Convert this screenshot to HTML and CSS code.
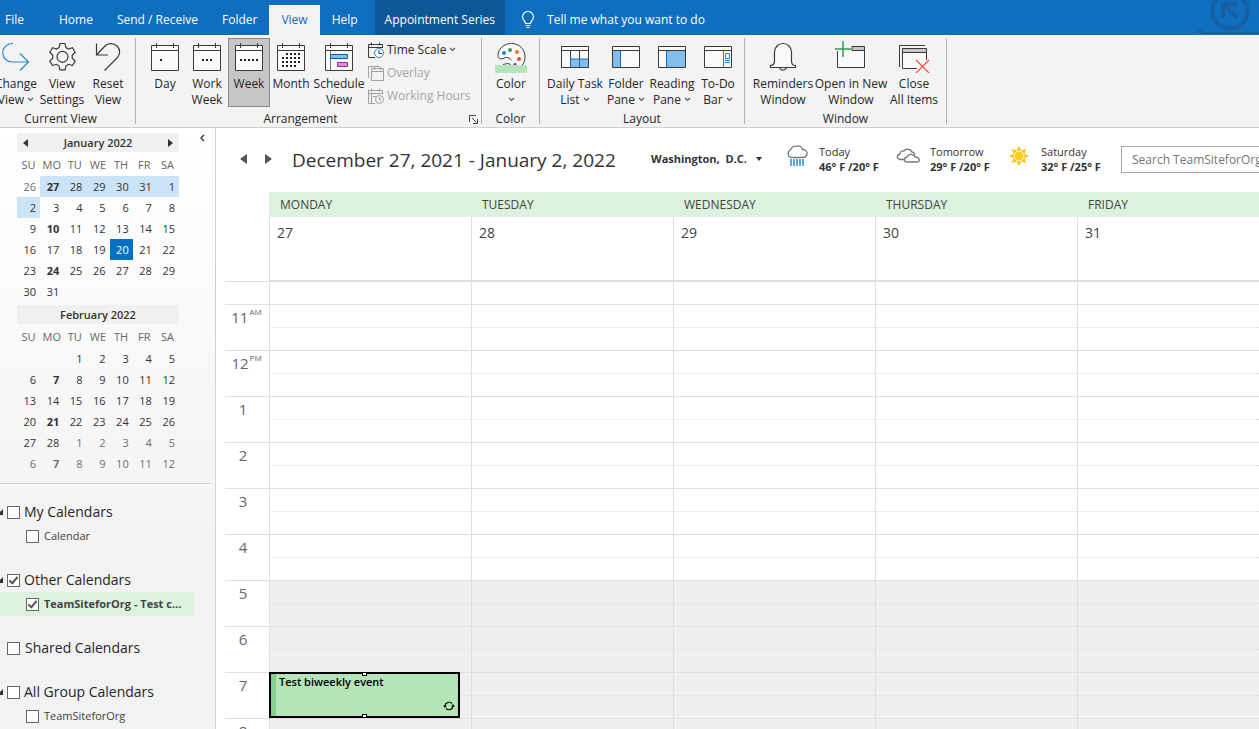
FILE: index.html
```html
<!DOCTYPE html>
<html lang="en">
<head>
    <meta charset="UTF-8">
    <meta name="viewport" content="width=device-width, initial-scale=1.0">
    <title>Calendar</title>
    <link rel="stylesheet" href="styles.css">
</head>
<body>
    <!-- Shared icon shapes -->
    <svg class="defs" aria-hidden="true">
        <symbol id="chevron" viewBox="0 0 7 5"><path d="M1 1l2.500 2.500L6 1" fill="none" stroke="#555" stroke-width="1.100"/></symbol>
        <symbol id="cal" viewBox="0 0 32 32"><path d="M2.500 4.500h27v25h-27z" fill="#fafafa" stroke="#3b3a39"/><path d="M2 9.500h28M7.500 2v5M24.500 2v5" fill="none" stroke="#3b3a39"/></symbol>
        <symbol id="pane" viewBox="0 0 32 32"><path d="M2.500 5.500h27v21h-27z" fill="#fafafa" stroke="#3b3a39"/><path d="M2 9.500h28" stroke="#3b3a39"/></symbol>
    </svg>

    <nav class="tabs">
        <a href="#" class="tab tab-file">File</a>
        <a href="#" class="tab">Home</a>
        <a href="#" class="tab">Send / Receive</a>
        <a href="#" class="tab">Folder</a>
        <a href="#" class="tab active">View</a>
        <a href="#" class="tab">Help</a>
        <a href="#" class="tab context">Appointment Series</a>
        <button class="tell-me">
            <svg width="14" height="18" viewBox="0 0 14 18" fill="none" stroke="#fff" stroke-width="1.200"><path d="M4.500 12.500c0-2.500-3-3.500-3-6.500a5.500 5.500 0 0 1 11 0c0 3-3 4-3 6.500zM4.500 14.500h5M5.500 16.500h3"/></svg>
            Tell me what you want to do
        </button>
        <svg class="title-art" width="63" height="35" viewBox="0 0 63 35" fill="none" stroke="#155fa3"><circle cx="34" cy="11" r="17.500" stroke-width="4"/><path d="M27 18V4h14M28 5l13 13" stroke-width="4.500"/><path d="M1 33c2-4 5-3 6 0h56" stroke-width="2"/></svg>
    </nav>

    <div class="ribbon">
        <section class="group group-view">
            <div class="buttons">
                <button class="big md">
                    <svg viewBox="0 0 32 32" fill="none" stroke="#2b88d0" stroke-width="1.200"><path d="M13 2.500H12a9 9 0 0 0 0 18.500h16M20 12.500l8.500 8.500-8.500 8.500"/></svg>
                    <span>Change<br>View <svg class="chev"><use href="#chevron"/></svg></span>
                </button>
                <button class="big sm">
                    <svg viewBox="0 0 32 32" fill="none" stroke="#3b3a39" stroke-width="1.200"><path d="M13 6.600L14 2.500h5l1 4.100 2.500 1.500 4-1.300 2.700 4.500-3 2.900v3l3 2.900-2.700 4.500-4-1.300-2.500 1.500-1 4.100h-5l-1-4.100-2.500-1.500-4 1.300-2.700-4.500 3-2.900v-3l-3-2.900 2.700-4.500 4 1.300z"/><circle cx="16.500" cy="15.800" r="5.500"/></svg>
                    <span>View<br>Settings</span>
                </button>
                <button class="big md">
                    <svg viewBox="0 0 32 32" fill="none" stroke="#3b3a39" stroke-width="1.200"><path d="M4.500 2.500v11.500h11.500M4.500 14L13 5c3-3 8-3.500 12 0 3.500 3.500 3.500 8.500 0 12L12.500 29.500"/></svg>
                    <span>Reset<br>View</span>
                </button>
            </div>
            <h2>Current View</h2>
        </section>

        <section class="group group-arrange">
            <div class="buttons">
                <button class="big sm">
                    <svg viewBox="0 0 32 32"><use href="#cal"/><path d="M11 18h2v2h-2z" fill="#222"/></svg>
                    <span>Day</span>
                </button>
                <button class="big sm">
                    <svg viewBox="0 0 32 32"><use href="#cal"/><path d="M11 18h2v2h-2zM15 18h2v2h-2zM19 18h2v2h-2z" fill="#222"/></svg>
                    <span>Work<br>Week</span>
                </button>
                <button class="big sm selected">
                    <svg viewBox="0 0 32 32"><use href="#cal"/><path d="M7 18h2v2H7zM11 18h2v2h-2zM15 18h2v2h-2zM19 18h2v2h-2zM23 18h2v2h-2z" fill="#222"/></svg>
                    <span>Week</span>
                </button>
                <button class="big sm">
                    <svg viewBox="0 0 32 32"><use href="#cal"/><path d="M11 13h14M7 17h18M7 21h18M7 25h14" stroke="#222" stroke-width="2" stroke-dasharray="2 2"/></svg>
                    <span>Month</span>
                </button>
                <button class="big wd">
                    <svg viewBox="0 0 32 32"><use href="#cal"/><path d="M7.500 10v19" stroke="#777"/><path d="M7.500 13.500h17v4h-17z" fill="#83bdec" stroke="#0f5ea8"/><path d="M14.500 21.500h10v4h-10z" fill="#d590da" stroke="#8f2f95"/></svg>
                    <span>Schedule<br>View</span>
                </button>
                <div class="stack">
                    <button class="small">
                        <svg viewBox="0 0 16 16" fill="none" stroke="#3b3a39"><path d="M7 15.500H.5v-13h14V6M0 5.500h14M3.500.5v3M11.500.5v3"/><circle cx="11" cy="11" r="4.500" fill="#fafafa" stroke="#2b88d0"/><path d="M11 8v3.500h3"/></svg>
                        Time Scale <svg class="chev"><use href="#chevron"/></svg>
                    </button>
                    <button class="small" disabled>
                        <svg viewBox="0 0 16 16" fill="none" stroke="#a19f9d"><path d="M.5 13V1.500H12M3.500 3.500h12v12h-12zM3 6.500h12M6.500 2v3M12.500 2v3"/></svg>
                        Overlay
                    </button>
                    <button class="small" disabled>
                        <svg viewBox="0 0 16 16" fill="none" stroke="#a19f9d"><path d="M7 15.500H.5v-13h14V6M0 5.500h14M3.500.5v3M11.500.5v3M3.500 6v9M5 8.500h3"/><circle cx="11.500" cy="11.500" r="4"/><path d="M11.500 9v3h2"/></svg>
                        Working Hours
                    </button>
                </div>
            </div>
            <h2>Arrangement</h2>
            <button class="launcher" aria-label="Arrangement options">
                <svg width="9" height="9" viewBox="0 0 9 9" fill="none" stroke="#444"><path d="M.5 7V.5H7M3 3l4.500 4.500M8.500 4v4.500H4"/></svg>
            </button>
        </section>

        <section class="group group-color">
            <div class="buttons">
                <button class="big md">
                    <svg viewBox="0 0 32 32"><path d="M8 24c3-2 8-2 8 1s1 3 3 3c6 0 11-5 11-12C30 8 24 2.500 16.500 2.500 9 2.500 3 8 3 14.500c0 3 2 4 5 3 3-2 7-1 8.500 2" fill="#fafafa" stroke="#3b3a39"/><circle cx="9" cy="12" r="2" fill="#1a86d9"/><circle cx="15" cy="9" r="2" fill="#2e9e4a"/><circle cx="22" cy="11" r="2" fill="#e07a10"/><circle cx="24" cy="18" r="2" fill="#ec4a3d"/><circle cx="20" cy="24" r="2" fill="#9b3fa5"/><path d="M0 24h32v8H0z" fill="#b4e5b9"/></svg>
                    <span>Color<br><svg class="chev"><use href="#chevron"/></svg></span>
                </button>
            </div>
            <h2>Color</h2>
        </section>

        <section class="group group-layout">
            <div class="buttons">
                <button class="big lg">
                    <svg viewBox="0 0 32 32"><use href="#pane"/><path d="M11 18h18.500v8.500H11z" fill="#83bdec"/><path d="M11.500 10v8M20.500 10v8" stroke="#3b3a39"/><path d="M11.500 18v9M20.500 18v9M11 18h19" stroke="#106ebe"/><path d="M2.500 5.500h27v21h-27z" fill="none" stroke="#3b3a39"/></svg>
                    <span>Daily Task<br>List <svg class="chev"><use href="#chevron"/></svg></span>
                </button>
                <button class="big sm">
                    <svg viewBox="0 0 32 32"><use href="#pane"/><path d="M3 10h7v16H3z" fill="#83bdec"/><path d="M10.500 10v16" stroke="#106ebe"/></svg>
                    <span>Folder<br>Pane <svg class="chev"><use href="#chevron"/></svg></span>
                </button>
                <button class="big md">
                    <svg viewBox="0 0 32 32"><use href="#pane"/><path d="M11 10h18v16H11z" fill="#83bdec"/><path d="M10.500 10v16" stroke="#106ebe"/></svg>
                    <span>Reading<br>Pane <svg class="chev"><use href="#chevron"/></svg></span>
                </button>
                <button class="big sm">
                    <svg viewBox="0 0 32 32"><use href="#pane"/><path d="M21.500 10v16M23.500 12.500h4v5h-4zM23 19.500h5M23 21.500h5" fill="none" stroke="#2387d0"/></svg>
                    <span>To-Do<br>Bar <svg class="chev"><use href="#chevron"/></svg></span>
                </button>
            </div>
            <h2>Layout</h2>
        </section>

        <section class="group group-window">
            <div class="buttons">
                <button class="big lg">
                    <svg viewBox="0 0 32 32" fill="#fafafa" stroke="#3b3a39" stroke-width="1.200"><path d="M12.500 27a4 4 0 0 0 7 0M3.500 26.500v-2c2.500 0 4-2 4-4.500v-9a8.500 8.500 0 0 1 17 0v9c0 2.500 1.500 4.500 4 4.500v2z"/></svg>
                    <span>Reminders<br>Window</span>
                </button>
                <button class="big xl">
                    <svg viewBox="0 0 32 32"><path d="M2.500 10v16.500h27v-21H16v4H7" fill="#fafafa"/><path d="M17 5.500h12.500v4H17z" fill="#c8c6c4" stroke="#3b3a39"/><path d="M2.500 10v16.500h27V9" fill="none" stroke="#3b3a39"/><path d="M8 0v16M0 8h16" stroke="#2ea04f" stroke-width="1.500"/></svg>
                    <span>Open in New<br>Window</span>
                </button>
                <button class="big md">
                    <svg viewBox="0 0 32 32"><path d="M1.500 26V4.500H27" fill="none" stroke="#3b3a39"/><path d="M4.500 7.500h24v20h-24z" fill="#fafafa"/><path d="M4.500 7.500h24v4h-24z" fill="#c8c6c4" stroke="#3b3a39"/><path d="M28.500 11v8M19 27.500H4.500V11" fill="none" stroke="#3b3a39"/><path d="M18 19l13 13M31 19L18 32" stroke="#ec4a3d" stroke-width="1.200"/></svg>
                    <span>Close<br>All Items</span>
                </button>
            </div>
            <h2>Window</h2>
        </section>
    </div>

    <div class="content">
        <aside class="sidebar">
            <div class="minis">
                <table class="mini">
                    <caption><div class="mini-title"><button aria-label="Previous month"><i class="arrow left"></i></button>January 2022<button aria-label="Next month"><i class="arrow right"></i></button></div></caption>
                    <tr><th>SU</th><th>MO</th><th>TU</th><th>WE</th><th>TH</th><th>FR</th><th>SA</th></tr>
                    <tr><td class="dim">26</td><td class="sel busy">27</td><td class="sel">28</td><td class="sel">29</td><td class="sel">30</td><td class="sel">31</td><td class="sel">1</td></tr>
                    <tr><td class="sel">2</td><td>3</td><td>4</td><td>5</td><td>6</td><td>7</td><td>8</td></tr>
                    <tr><td>9</td><td class="busy">10</td><td>11</td><td>12</td><td>13</td><td>14</td><td>15</td></tr>
                    <tr><td>16</td><td>17</td><td>18</td><td>19</td><td class="today">20</td><td>21</td><td>22</td></tr>
                    <tr><td>23</td><td class="busy">24</td><td>25</td><td>26</td><td>27</td><td>28</td><td>29</td></tr>
                    <tr><td>30</td><td>31</td><td></td><td></td><td></td><td></td><td></td></tr>
                </table>
                <table class="mini">
                    <caption><div class="mini-title">February 2022</div></caption>
                    <tr><th>SU</th><th>MO</th><th>TU</th><th>WE</th><th>TH</th><th>FR</th><th>SA</th></tr>
                    <tr><td></td><td></td><td>1</td><td>2</td><td>3</td><td>4</td><td>5</td></tr>
                    <tr><td>6</td><td class="busy">7</td><td>8</td><td>9</td><td>10</td><td>11</td><td>12</td></tr>
                    <tr><td>13</td><td>14</td><td>15</td><td>16</td><td>17</td><td>18</td><td>19</td></tr>
                    <tr><td>20</td><td class="busy">21</td><td>22</td><td>23</td><td>24</td><td>25</td><td>26</td></tr>
                    <tr><td>27</td><td>28</td><td class="dim">1</td><td class="dim">2</td><td class="dim">3</td><td class="dim">4</td><td class="dim">5</td></tr>
                    <tr><td class="dim">6</td><td class="dim busy">7</td><td class="dim">8</td><td class="dim">9</td><td class="dim">10</td><td class="dim">11</td><td class="dim">12</td></tr>
                </table>
                <button class="collapse" aria-label="Collapse pane">
                    <svg width="6" height="8" viewBox="0 0 6 8"><path d="M5 1L2 4l3 3" fill="none" stroke="#444" stroke-width="1.500"/></svg>
                </button>
            </div>
            <div class="lists">
                <div class="list">
                    <label class="list-head open"><input type="checkbox">My Calendars</label>
                    <label class="list-item"><input type="checkbox">Calendar</label>
                </div>
                <div class="list">
                    <label class="list-head open"><input type="checkbox" checked>Other Calendars</label>
                    <label class="list-item current"><input type="checkbox" checked>TeamSiteforOrg - Test c...</label>
                </div>
                <div class="list">
                    <label class="list-head"><input type="checkbox">Shared Calendars</label>
                </div>
                <div class="list">
                    <label class="list-head open"><input type="checkbox">All Group Calendars</label>
                    <label class="list-item"><input type="checkbox">TeamSiteforOrg</label>
                </div>
            </div>
        </aside>

        <main>
            <header class="toolbar">
                <div class="range-nav">
                    <button aria-label="Back"><i class="arrow left big-arrow"></i></button>
                    <button aria-label="Forward"><i class="arrow right big-arrow"></i></button>
                </div>
                <h1>December 27, 2021 - January 2, 2022</h1>
                <button class="place">Washington,&nbsp; D.C. <i class="arrow down"></i></button>
                <div class="forecast">
                    <svg width="24" height="24" viewBox="0 0 24 24"><path d="M6 13.500a4 4 0 0 1-.5-7.500C6.500 3 9 1.500 11.500 2.500 14 .8 17 2.500 17.500 5.500c3.500 0 5 2.500 4.500 5-.5 2-2 3-4 3z" fill="#fff" stroke="#777" stroke-width="1.300"/><path d="M6 15v7M9 15v7M12 15v7M15 15v7M18 15v7" stroke="#1e90e0" stroke-width="1.500"/></svg>
                    <p>Today<b>46° F /20° F</b></p>
                </div>
                <div class="forecast">
                    <svg width="24" height="24" viewBox="0 0 24 24" fill="#fff" stroke="#777" stroke-width="1.300"><path d="M4 15.500C1 15 0 11 4 10c0-2 2-3.500 4-3 2-3 7-2 8 1 2 0 3 2 2.500 4l-3 3.500z"/><path d="M11 18c-3 0-4-4 0-5 2-4 7-3 8 0 3 0 5 2 4 4-.5 1-1 1-2 1z"/></svg>
                    <p>Tomorrow<b>29° F /20° F</b></p>
                </div>
                <div class="forecast">
                    <svg width="24" height="24" viewBox="0 0 24 24"><path d="M12 2l2.300 4.500 4.800-1.600-1.600 4.800L22 12l-4.500 2.300 1.600 4.800-4.800-1.600L12 22l-2.300-4.500-4.800 1.600 1.600-4.800L2 12l4.500-2.300-1.600-4.800 4.800 1.600z" fill="#fdbf0f"/><circle cx="12" cy="12" r="5" fill="#ffce1f" stroke="#fff"/></svg>
                    <p>Saturday<b>32° F /25° F</b></p>
                </div>
                <input class="search" type="search" placeholder="Search TeamSiteforOrg - Test calendar" aria-label="Search calendar">
            </header>

            <div class="week">
                <div class="row names"><span class="time"></span><span>MONDAY</span><span>TUESDAY</span><span>WEDNESDAY</span><span>THURSDAY</span><span>FRIDAY</span></div>
                <div class="row dates"><span class="time"></span><span>27</span><span>28</span><span>29</span><span>30</span><span>31</span></div>
                <div class="row stub"><span class="time"></span><span></span><span></span><span></span><span></span><span></span></div>
                <div class="row hour"><span class="time">11<sup>AM</sup></span><span></span><span></span><span></span><span></span><span></span></div>
                <div class="row hour"><span class="time">12<sup>PM</sup></span><span></span><span></span><span></span><span></span><span></span></div>
                <div class="row hour"><span class="time">1</span><span></span><span></span><span></span><span></span><span></span></div>
                <div class="row hour"><span class="time">2</span><span></span><span></span><span></span><span></span><span></span></div>
                <div class="row hour"><span class="time">3</span><span></span><span></span><span></span><span></span><span></span></div>
                <div class="row hour"><span class="time">4</span><span></span><span></span><span></span><span></span><span></span></div>
                <div class="row hour off"><span class="time">5</span><span></span><span></span><span></span><span></span><span></span></div>
                <div class="row hour off"><span class="time">6</span><span></span><span></span><span></span><span></span><span></span></div>
                <div class="row hour off">
                    <span class="time">7</span>
                    <span>
                        <a href="#" class="event">Test biweekly event
                            <svg class="recur" width="12" height="10" viewBox="0 0 12 10" fill="none" stroke="#111" stroke-width="1.200"><path d="M2 5a4 3.500 0 0 1 7-2.500M10 5a4 3.500 0 0 1-7 2.500"/><path d="M0 4.500h4L2 7zM8 5.500h4L10 3z" fill="#111" stroke="none"/></svg>
                        </a>
                    </span>
                    <span></span><span></span><span></span><span></span>
                </div>
                <div class="row hour off"><span class="time">8</span><span></span><span></span><span></span><span></span><span></span></div>
            </div>
        </main>
    </div>
</body>
</html>
```
FILE: styles.css
```css
*, *::before, *::after {
    box-sizing: border-box;
}
body {
    margin: 0;
    height: 100vh;
    display: flex;
    flex-direction: column;
    overflow: hidden;
    background: #fff;
    color: #262626;
    font-family: "Open Sans", "Noto Sans", sans-serif;
    font-size: 12px;
    line-height: 16px;
}
button {
    font: inherit;
    color: inherit;
    background: none;
    border: none;
    padding: 0;
}
h1, h2, p {
    margin: 0;
    font-weight: normal;
}
.defs {
    display: none;
}

/* Tabs */
.tabs {
    display: flex;
    flex: none;
    height: 35px;
    padding-top: 5px;
    background: #106ebe;
    color: #fff;
    white-space: nowrap;
}
.tab {
    display: flex;
    align-items: center;
    padding: 0 12px;
    color: #fff;
    text-decoration: none;
}
.tab-file {
    padding-left: 5px;
    padding-right: 23px;
}
.tab.active {
    background: #f3f3f3;
    color: #106ebe;
}
.tab.context {
    margin: -5px 0 0 5px;
    padding: 5px 10px 0;
    background: #0e5797;
}
.tell-me {
    display: flex;
    align-items: center;
    gap: 12px;
    margin-left: 16px;
}
.title-art {
    flex: none;
    margin: -5px 0 0 auto;
}

/* Ribbon */
.ribbon {
    display: flex;
    flex: none;
    height: 93px;
    padding: 3px 0;
    margin-left: -15px;
    background: #f3f3f3;
    border-bottom: 1px solid #d2d0ce;
    white-space: nowrap;
}
.group {
    position: relative;
    flex: none;
    display: flex;
    flex-direction: column;
    padding-left: 8px;
    border-right: 1px solid #b3b0ad;
}
.group h2 {
    height: 13px;
    margin-left: -8px;
    font-size: 12px;
    text-align: center;
}
.group-view { width: 151px; padding-left: 6px; }
.group-arrange { width: 346px; }
.group-arrange h2 { margin-right: 16px; }
.group-color { width: 58px; padding-left: 4px; }
.group-layout { width: 205px; padding-left: 5px; }
.group-window { width: 202px; }
.group-color h2 { margin-left: -4px; }
.group-view h2, .group-layout h2 { margin-left: -5px; }
.buttons {
    display: flex;
    flex: none;
    height: 73px;
}
.big {
    display: flex;
    flex-direction: column;
    align-items: center;
    gap: 3px;
    height: 69px;
    padding-top: 2px;
    border: 1px solid transparent;
}
.big > svg {
    flex: none;
    width: 32px;
    height: 32px;
}
.sm { width: 42px; }
.md { width: 50px; }
.wd { width: 54px; }
.lg { width: 60px; }
.xl { width: 76px; }
.selected {
    background: #c6c6c6;
    border-color: #8a8886;
}
.chev {
    width: 7px;
    height: 5px;
    vertical-align: 2px;
}
.stack {
    display: flex;
    flex-direction: column;
    padding-left: 2px;
}
.small {
    display: flex;
    align-items: center;
    gap: 3px;
    height: 23px;
}
.small > svg:first-child {
    width: 16px;
    height: 16px;
}
.small:disabled {
    color: #a8a6a4;
}
.launcher {
    position: absolute;
    right: 3px;
    bottom: 0;
    line-height: 9px;
}

/* Sidebar */
.content {
    display: flex;
    flex: 1;
    min-height: 0;
}
.sidebar {
    flex: none;
    width: 216px;
    background: linear-gradient(#fff, #f2f2f2 450px);
    border-right: 1px solid #d2d2d2;
}
.minis {
    position: relative;
    margin-right: 4px;
    padding: 5px 0 9px 17px;
    border-bottom: 1px solid #cfcfcf;
    box-shadow: 0 2px #fff;
}
.mini {
    border-collapse: collapse;
    width: 162px;
    margin-bottom: 3px;
    table-layout: fixed;
    color: #333;
    font-size: 11px;
}
.mini:last-of-type {
    margin-bottom: 0;
}
.mini-title {
    display: flex;
    justify-content: center;
    align-items: center;
    height: 19px;
    margin-bottom: 1px;
    padding: 0 6px;
    background: #f0f0f0;
    font-weight: 600;
}
.mini-title button:first-child { margin-right: auto; }
.mini-title button:last-child { margin-left: auto; }
.mini th {
    height: 23px;
    padding: 0;
    color: #666;
    font-weight: normal;
}
.mini td {
    height: 21px;
    padding: 0 4px 0 0;
    text-align: right;
}
.mini .dim { color: #707070; }
.mini .busy { font-weight: bold; }
.mini .sel { background: #cce4f7; }
.mini .today { background: #0072c6; color: #fff; }
.collapse {
    position: absolute;
    top: 6px;
    right: 6px;
    line-height: 8px;
}
.arrow {
    display: block;
    border: 4px solid transparent;
}
.arrow.left { border-right: 5px solid #333; border-left: 0; }
.arrow.right { border-left: 5px solid #333; border-right: 0; }
.arrow.down { border-top: 4px solid #333; border-width: 4px 3px 0; }
.arrow.big-arrow { border-top-width: 5px; border-bottom-width: 5px; }
.arrow.big-arrow.left { border-right: 7px solid #555; }
.arrow.big-arrow.right { border-left: 7px solid #555; }

/* Calendar lists */
.lists {
    display: flex;
    flex-direction: column;
    gap: 20px;
    padding-top: 16px;
    white-space: nowrap;
}
.list-head, .list-item {
    display: flex;
    align-items: center;
    gap: 5px;
    height: 24px;
    width: 194px;
}
.list-head {
    padding-left: 7px;
    font-size: 14px;
}
.list-head.open {
    gap: 4px;
    padding-left: 0;
}
.list-head.open::before {
    content: "";
    width: 3px;
    height: 6px;
    background: #333;
    clip-path: polygon(100% 0, 100% 100%, 0 100%, 0 50%);
}
.list-item {
    padding-left: 26px;
    font-size: 11px;
    color: #444;
}
.list-item.current {
    background: #dcf1de;
    font-weight: bold;
}
.lists input {
    appearance: none;
    flex: none;
    display: grid;
    place-items: center;
    width: 13px;
    height: 13px;
    margin: 0;
    background: #fff;
    border: 1px solid #666;
}
.lists input:checked::before {
    content: "";
    width: 5px;
    height: 9px;
    margin-bottom: 2px;
    border: solid #555;
    border-width: 0 2px 2px 0;
    transform: rotate(40deg);
}

/* Week view */
main {
    flex: 1;
    min-width: 0;
    padding-left: 9px;
    overflow: hidden;
}
.toolbar {
    display: flex;
    align-items: center;
    height: 62px;
    margin-bottom: 2px;
    padding-left: 15px;
    white-space: nowrap;
    color: #333;
}
.toolbar > * {
    flex: none;
}
.range-nav {
    display: flex;
    gap: 18px;
}
h1 {
    width: 379px;
    padding: 2px 0 0 20px;
    font-size: 19px;
    line-height: 26px;
}
.place {
    display: flex;
    align-items: center;
    gap: 9px;
    width: 134px;
    font-size: 11px;
    font-weight: bold;
}
.forecast {
    display: flex;
    gap: 10px;
    width: 111px;
    font-size: 11px;
    line-height: 15px;
}
.forecast b {
    display: block;
}
.search {
    width: 202px;
    height: 27px;
    margin-left: 3px;
    padding: 0 10px;
    border: 1px solid #a3a8b8;
    font: inherit;
}
.search::placeholder {
    color: #767676;
}
.row {
    display: grid;
    grid-template-columns: 44px repeat(5, minmax(202px, 1fr));
}
.names {
    height: 25px;
}
.names span {
    padding-left: 11px;
    background: #dcf1de;
    color: #444;
    line-height: 25px;
}
.names .time {
    background: none;
}
.dates {
    height: 65px;
    font-size: 14px;
    color: #444;
}
.dates span {
    padding: 8px 7px;
    border-left: 1px solid #dfdfdf;
    border-bottom: 2px solid #dfdfdf;
}
.dates .time {
    border-left: none;
    border-bottom-width: 1px;
}
.stub {
    height: 22px;
}
.stub span, .hour span {
    border-left: 1px solid #dfdfdf;
}
.hour {
    height: 46px;
}
.hour span {
    position: relative;
    border-top: 1px solid #dfdfdf;
}
.hour span:not(.time)::before {
    content: "";
    display: block;
    height: 23px;
    border-bottom: 1px dotted #dcdcdc;
}
.off span {
    background: #efefef;
}
.stub .time, .hour .time {
    border-left: none;
    background: #fff;
}
.hour .time {
    display: flex;
    justify-content: center;
    padding: 3px 8px 0 0;
    color: #666;
    font-size: 15px;
    line-height: 18px;
}
.time sup {
    margin: -2px -7px 0 1px;
    font-size: 8px;
    line-height: 12px;
}

/* Event block, drawn over the hour cell */
.event {
    position: absolute;
    top: -1px;
    left: -1px;
    right: 11px;
    height: 46px;
    padding-left: 8px;
    border: 2px solid #000;
    background: #b4e5b9;
    box-shadow: inset 5px 0 #86cf8d;
    color: #000;
    font-size: 11px;
    font-weight: 600;
    text-decoration: none;
}
.event::before, .event::after {
    content: "";
    position: absolute;
    left: 50%;
    width: 5px;
    height: 4px;
    margin-left: -3px;
    background: #fff;
    border: 1px solid #000;
}
.event::before { top: -2px; }
.event::after { bottom: -2px; }
.recur {
    position: absolute;
    right: 3px;
    bottom: 5px;
}
```
